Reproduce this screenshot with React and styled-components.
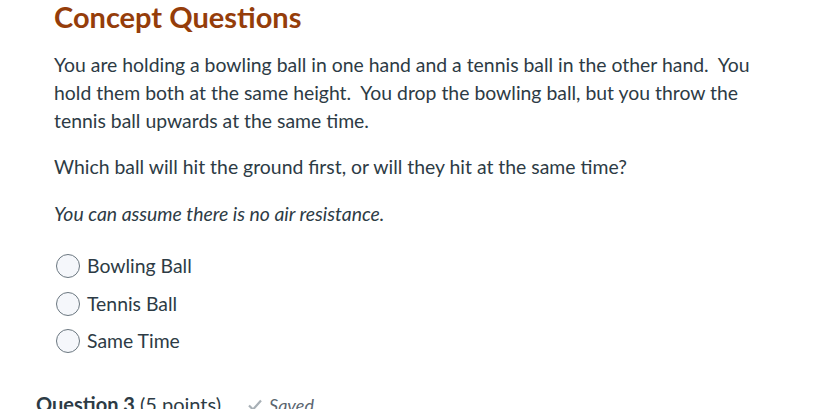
import React from 'react'
import styled, { createGlobalStyle } from 'styled-components'

const GlobalStyle = createGlobalStyle`
  html, body {
    margin: 0;
    padding: 0;
    background: #fff;
    font-family: Lato, "Open Sans", sans-serif;
    color: #2d3b45;
  }
`

const Page = styled.main`
  width: 818px;
  height: 409px;
  overflow: hidden;
  padding: 0 0 0 36px;
  box-sizing: border-box;
`

const Question = styled.section`
  padding-left: 18px;
  width: 712px;
`

const Title = styled.h2`
  margin: 0;
  padding-top: 0;
  font-size: 29px;
  line-height: 34px;
  font-weight: 700;
  color: #953d0a;
`

const Para = styled.p`
  margin: ${p => p.$top || 0}px 0 0;
  font-size: 19.4px;
  line-height: 28px;
  font-style: ${p => (p.$italic ? 'italic' : 'normal')};
  white-space: pre-wrap;
`

const Options = styled.div`
  display: flex;
  flex-direction: column;
  gap: 13.5px;
  margin-top: 26px;
`

const Option = styled.label`
  display: flex;
  align-items: center;
  gap: 7px;
  font-size: 19.4px;
  line-height: 24px;
  padding-left: 2px;
`

const Radio = styled.span`
  width: 22px;
  height: 22px;
  border: 1px solid #6b7780;
  border-radius: 50%;
  background: #f5f7fb;
  flex: none;
`

const NextHeader = styled.div`
  display: flex;
  align-items: baseline;
  margin-top: 39px;
  font-size: 20px;
`

const QNum = styled.span`
  font-weight: 700;
  margin-right: 5px;
`

const Points = styled.span`
  font-weight: 400;
`

const Saved = styled.span`
  display: inline-flex;
  align-items: center;
  gap: 6px;
  margin-left: 26px;
  font-size: 18px;
  font-style: italic;
  color: #5b6670;
`

const options = ['Bowling Ball', 'Tennis Ball', 'Same Time']

export default function App() {
  return (
    <Page>
      <GlobalStyle />
      <Question>
        <Title>Concept Questions</Title>
        <Para $top={17}>
          {'You are holding a bowling ball in one hand and a tennis ball in the other hand.  You hold them both at the same height.  You drop the bowling ball, but you throw the tennis ball upwards at the same time.'}
        </Para>
        <Para $top={18}>Which ball will hit the ground first, or will they hit at the same time?</Para>
        <Para $top={19} $italic>You can assume there is no air resistance.</Para>
        <Options>
          {options.map(o => (
            <Option key={o}>
              <Radio />
              {o}
            </Option>
          ))}
        </Options>
      </Question>
      <NextHeader>
        <QNum>Question 3</QNum>
        <Points>(5 points)</Points>
        <Saved>
          <svg width="16" height="14" viewBox="0 0 16 14">
            <path d="M2 7.5 L6 11.5 L14 2.5" fill="none" stroke="#a8b0b6" strokeWidth="2.2" />
          </svg>
          Saved
        </Saved>
      </NextHeader>
    </Page>
  )
}
